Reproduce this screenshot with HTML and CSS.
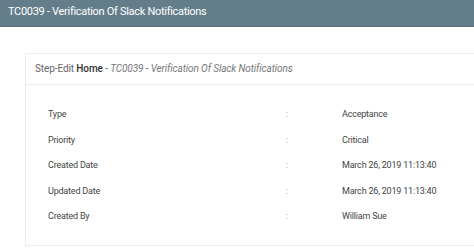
FILE: index.html
```html
<!DOCTYPE html>
<html lang="en">
<head>
  <meta charset="UTF-8">
  <title>TC0039 - Verification Of Slack Notifications</title>
  <link rel="stylesheet" href="styles.css">
</head>
<body>
  <div class="topbar">TC0039 - Verification Of Slack Notifications</div>

  <div class="content">
    <div class="card">
      <div class="card-head">
        Step-Edit <b>Home</b> - <i>TC0039 - Verification Of Slack Notifications</i>
      </div>
      <div class="card-body">
        <div class="row"><span>Type</span><span>:</span><span>Acceptance</span></div>
        <div class="row"><span>Priority</span><span>:</span><span>Critical</span></div>
        <div class="row"><span>Created Date</span><span>:</span><span>March 26, 2019 11:13:40</span></div>
        <div class="row"><span>Updated Date</span><span>:</span><span>March 26, 2019 11:13:40</span></div>
        <div class="row"><span>Created By</span><span>:</span><span>William Sue</span></div>
      </div>
    </div>
  </div>
</body>
</html>
```
FILE: styles.css
```css
body {
  margin: 0;
  font-family: Roboto, "Liberation Sans", sans-serif;
  background: #fff;
  overflow: hidden;
}
.topbar {
  height: 27px;
  line-height: 24px;
  padding-left: 8px;
  background-color: #637e8a;
  border-bottom: 1px solid #56707c;
  box-sizing: border-box;
  color: #fff;
  font-size: 11px;
  letter-spacing: -0.3px;
}
.content {
  padding: 26px 0 0 25px;
  overflow: hidden;
}
.card {
  width: 520px;
  border: 1px solid #eeeeee;
}
.card-head {
  height: 30px;
  line-height: 30px;
  padding-left: 9px;
  border-bottom: 1px solid #eeeeee;
  font-size: 10px;
  letter-spacing: -0.1px;
  color: #666;
}
.card-head b {
  font-weight: 500;
  color: #333;
}
.card-head i {
  color: #777;
}
.card-body {
  padding: 17px 0 15px 22px;
}
.row {
  display: grid;
  grid-template-columns: 238px 56px auto;
  height: 25.6px;
  line-height: 25.6px;
  font-size: 9px;
  letter-spacing: -0.2px;
  color: #444;
}
.row span:nth-child(2) {
  color: #999;
}
```
